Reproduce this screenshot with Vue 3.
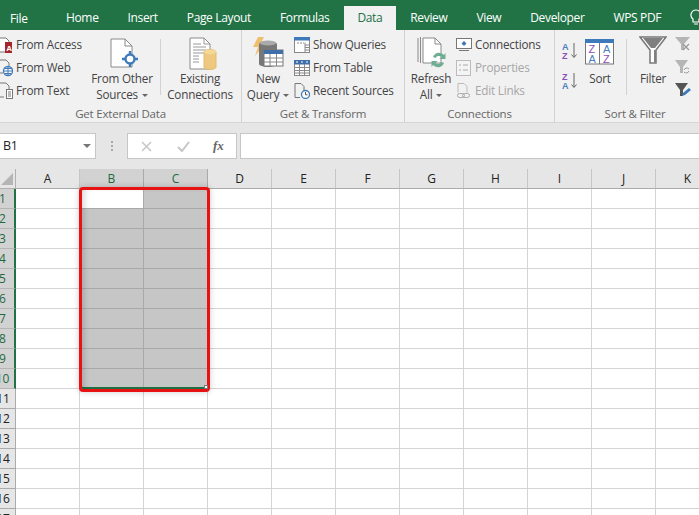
<script setup>
const tabs = ['Home', 'Insert', 'Page Layout', 'Formulas', 'Data', 'Review', 'View', 'Developer', 'WPS PDF']
const columns = ['A', 'B', 'C', 'D', 'E', 'F', 'G', 'H', 'I', 'J', 'K']
const rows = Array.from({ length: 17 }, (_, i) => i + 1)

function cellClass(row, col) {
  const inRange = row <= 10 && (col === 'B' || col === 'C')
  return { sel: inRange && !(row === 1 && col === 'B'), active: row === 1 && col === 'B' }
}
</script>

<template>
  <div class="app">
    <!-- tabs -->
    <div class="tabbar">
      <span class="file">File</span>
      <span v-for="t in tabs" :key="t" class="tab" :class="{ on: t === 'Data' }">{{ t }}</span>
      <svg class="bulb" width="12" height="18" viewBox="0 0 12 18"><path d="M6 1a5 5 0 0 0-3 9v3h6v-3a5 5 0 0 0-3-9zM4 15h4" fill="none" stroke="#fff" stroke-width="1.2"/></svg>
    </div>

    <!-- ribbon -->
    <div class="ribbon">
      <section class="group g1">
        <div class="body">
          <div class="smalls w-ext">
            <div class="small">
              <svg class="ic" width="13" height="18" viewBox="0 0 13 18"><path d="M0 2h6l3 3v11H0" fill="#fff" stroke="#777"/><rect x="5" y="6" width="7" height="11" fill="#a4262c"/><text x="6.200" y="15" font-size="8" font-weight="700" fill="#fff" font-family="Liberation Sans">A</text></svg>
              From Access
            </div>
            <div class="small">
              <svg class="ic" width="13" height="18" viewBox="0 0 13 18"><path d="M0 1h6l3 3v3M0 14h3" fill="none" stroke="#777"/><circle cx="8" cy="12" r="4.500" fill="#fff" stroke="#3e79b9" stroke-width="1.300"/><path d="M3.500 12h9M8 7.500v9M5 9.500h6M5 14.500h6" stroke="#3e79b9"/></svg>
              From Web
            </div>
            <div class="small">
              <svg class="ic" width="13" height="18" viewBox="0 0 13 18"><path d="M0 1h6l3 3v3M0 15h4" fill="none" stroke="#777"/><rect x="6.500" y="7.500" width="6" height="9" fill="#fff" stroke="#777"/><path d="M8 10h3M8 12h3M8 14h3" stroke="#777"/></svg>
              From Text
            </div>
          </div>
          <div class="big w-other">
            <svg class="bigicon" width="30" height="34" viewBox="0 0 30 34"><path d="M1 1h14l7 7v21H1z" fill="#fff" stroke="#8a8a8a"/><path d="M15 1v7h7" fill="none" stroke="#8a8a8a"/><circle cx="20" cy="21" r="4.500" fill="#fff" stroke="#3e79b9" stroke-width="2.400"/><path d="M12 21h4M24 21h4M20 13v4M20 25v4" stroke="#3e79b9" stroke-width="2.400"/></svg>
            <span>From Other</span>
            <span>Sources <i class="caret"></i></span>
          </div>
          <div class="sep s1"></div>
          <div class="big w-exist">
            <svg class="bigicon" width="30" height="34" viewBox="0 0 30 34"><path d="M1 1h14l6 6v25H1z" fill="#fff" stroke="#8a8a8a"/><path d="M15 1v6h6M4 7h8M4 10h13M4 13h13M4 16h13M4 19h6M4 22h6M4 25h6" fill="none" stroke="#9a9a9a"/><path d="M15 15a6 2.500 0 0 1 12 0v15a6 2.500 0 0 1-12 0z" fill="#edc87e" stroke="#e3bb6b"/><ellipse cx="21" cy="15" rx="6" ry="2.500" fill="#f4d898"/></svg>
            <span>Existing</span>
            <span>Connections</span>
          </div>
        </div>
        <div class="label">Get External Data</div>
      </section>

      <section class="group g2">
        <div class="body">
          <div class="big w-query">
            <svg class="bigicon" width="34" height="34" viewBox="0 0 34 34"><path d="M7 1h6l-4 8h4L4 20l3-9H2z" fill="#eec06e"/><path d="M8 8a9 3 0 0 1 18 0v20a9 3 0 0 1-18 0z" fill="#777"/><ellipse cx="17" cy="7" rx="8" ry="2.600" fill="#aaa"/><rect x="13" y="14" width="19" height="16" fill="#fff" stroke="#777"/><rect x="13" y="14" width="19" height="4" fill="#3e6fa8"/><path d="M13 22h19M13 26h19M19 18v12M25.500 18v12" stroke="#888"/></svg>
            <span>New</span>
            <span>Query <i class="caret"></i></span>
          </div>
          <div class="smalls">
            <div class="small">
              <svg class="ic2" width="16" height="16" viewBox="0 0 16 16"><rect x=".5" y=".5" width="15" height="15" fill="#fff" stroke="#888"/><rect y="0" width="16" height="3.500" fill="#3e79b9"/><path d="M11 5.500v10M11 8h4M11 10.500h4M11 13h4M3 6h2M6 6h2M9 6h1" stroke="#888"/></svg>
              Show Queries
            </div>
            <div class="small">
              <svg class="ic2" width="16" height="16" viewBox="0 0 16 16"><rect x=".5" y=".5" width="15" height="15" fill="#fff" stroke="#888"/><rect y="0" width="16" height="4.500" fill="#3e6fa8"/><path d="M2 2h2M7 2h2M12 2h2" stroke="#fff"/><path d="M0 7.500h16M0 10.500h16M0 13h16M5.500 4v12M10.500 4v12" stroke="#888"/></svg>
              From Table
            </div>
            <div class="small">
              <svg class="ic2" width="16" height="16" viewBox="0 0 16 16"><path d="M1 .500h6l3 3v6M1 .5v14h5" fill="none" stroke="#777"/><circle cx="11.500" cy="11.500" r="4" fill="#fff" stroke="#3e79b9" stroke-width="1.300"/><path d="M11.500 9v2.800h2" fill="none" stroke="#555"/></svg>
              Recent Sources
            </div>
          </div>
        </div>
        <div class="label">Get &amp; Transform</div>
      </section>

      <section class="group g3">
        <div class="body">
          <div class="big w-refresh">
            <svg class="bigicon" width="32" height="34" viewBox="0 0 32 34"><path d="M3 2v24M5.500 1v26" stroke="#8a8a8a" fill="none"/><path d="M8 2h12l6 6v19H8z" fill="#fff" stroke="#8a8a8a"/><path d="M20 2v6h6" fill="none" stroke="#8a8a8a"/><path d="M18 21a6.500 6.500 0 0 1 11-2l1.500-2v6h-6l2-2a4 4 0 0 0-6 1zM29 27a6.500 6.500 0 0 1-11 2l-1.500 2v-6h6l-2 2a4 4 0 0 0 6-1z" fill="#6fae93"/></svg>
            <span>Refresh</span>
            <span>All <i class="caret"></i></span>
          </div>
          <div class="smalls">
            <div class="small">
              <svg class="ic2" width="16" height="16" viewBox="0 0 16 16"><rect x=".5" y="1.500" width="15" height="10" fill="#fff" stroke="#777"/><path d="M8 4l2.500 2.500L8 9 5.500 6.500z" fill="#3e79b9"/><path d="M3 13.500h10" stroke="#777"/></svg>
              Connections
            </div>
            <div class="small dim">
              <svg class="ic2" width="16" height="16" viewBox="0 0 16 16"><rect x=".5" y=".5" width="14" height="15" fill="#f4f4f4" stroke="#bbb"/><path d="M3 5h2M3 10h2M7 5h5M7 10h5" stroke="#aaa"/></svg>
              Properties
            </div>
            <div class="small dim">
              <svg class="ic2" width="16" height="16" viewBox="0 0 16 16"><path d="M2 .500h6l3 3v6M2 .5v9" fill="none" stroke="#bbb"/><rect x="1.500" y="10.500" width="7" height="4" rx="2" fill="none" stroke="#aaa"/><rect x="6.500" y="10.500" width="7" height="4" rx="2" fill="none" stroke="#aaa"/></svg>
              Edit Links
            </div>
          </div>
        </div>
        <div class="label">Connections</div>
      </section>

      <section class="group g4">
        <div class="body">
          <div class="sorts">
            <svg width="16" height="18" viewBox="0 0 16 18" font-family="Liberation Sans" font-size="9" font-weight="700"><text x="0" y="8" fill="#4a7fc0">A</text><text x="0" y="17" fill="#8a4fb5">Z</text><path d="M12 1v14M9.500 12.500l2.500 3 2.500-3" fill="none" stroke="#666"/></svg>
            <svg width="16" height="18" viewBox="0 0 16 18" font-family="Liberation Sans" font-size="9" font-weight="700"><text x="0" y="8" fill="#8a4fb5">Z</text><text x="0" y="17" fill="#4a7fc0">A</text><path d="M12 1v14M9.500 12.500l2.500 3 2.500-3" fill="none" stroke="#666"/></svg>
          </div>
          <div class="big w-sort">
            <svg class="bigicon" width="30" height="26" viewBox="0 0 30 26" font-family="Liberation Sans" font-size="11" font-weight="400"><rect x=".5" y=".5" width="28" height="24.500" fill="#fff" stroke="#777"/><rect width="29" height="4" fill="#3e79b9"/><path d="M14.500 4v21" stroke="#777"/><text x="3.500" y="14" fill="#8a4fb5">Z</text><text x="3.500" y="24" fill="#4a7fc0">A</text><text x="18" y="14" fill="#4a7fc0">A</text><text x="18" y="24" fill="#8a4fb5">Z</text></svg>
            <span>Sort</span>
          </div>
          <div class="sep s4"></div>
          <div class="big w-filter">
            <svg class="bigicon" width="28" height="28" viewBox="0 0 28 28"><path d="M1 1h26L17 14v13h-6V14z" fill="#fff" stroke="#777" stroke-width="1.500"/><path d="M4 2h20l-8 10h-4zM15 14h2v12h-2z" fill="#7f7f7f"/></svg>
            <span>Filter</span>
          </div>
          <div class="filter-tools">
            <svg width="16" height="16" viewBox="0 0 16 16"><path d="M0 1h15L9 8v6H6V8z" fill="#b5b5b5"/><path d="M8 8l6 6M14 8l-6 6" stroke="#999" stroke-width="1.300"/></svg>
            <svg width="16" height="16" viewBox="0 0 16 16"><path d="M0 1h13L8 8v6H5V8z" fill="#b5b5b5"/><path d="M9 11a3 3 0 0 1 5-1M14 12a3 3 0 0 1-5 1" fill="none" stroke="#999"/></svg>
            <svg width="16" height="16" viewBox="0 0 16 16"><path d="M0 1h13L8 8v6H5V8z" fill="#555"/><path d="M7 14l1-3 6-5 2 2-6 5z" fill="#3e79b9"/></svg>
          </div>
        </div>
        <div class="label">Sort &amp; Filter</div>
      </section>
    </div>

    <!-- formula bar -->
    <div class="fbar">
      <div class="namebox">B1<i class="down"></i></div>
      <div class="dots"></div>
      <div class="fxbox">
        <svg width="11" height="11" viewBox="0 0 11 11"><path d="M1 1l9 9M10 1l-9 9" stroke="#c6c6c6" stroke-width="1.500"/></svg>
        <svg width="13" height="11" viewBox="0 0 13 11"><path d="M1 6l4 4 7-9" fill="none" stroke="#c6c6c6" stroke-width="2"/></svg>
        <span class="fx">fx</span>
      </div>
      <div class="finput"></div>
    </div>

    <!-- sheet -->
    <div class="sheet">
      <div class="corner"><i></i></div>
      <div v-for="c in columns" :key="c" class="colh" :class="{ hot: c === 'B' || c === 'C' }">{{ c }}</div>
      <template v-for="r in rows" :key="r">
        <div class="rowh" :class="{ hot: r <= 10 }">{{ r }}</div>
        <div v-for="c in columns" :key="c" class="cell" :class="cellClass(r, c)"></div>
      </template>
      <div class="selection"><i class="handle"></i></div>
    </div>
  </div>
</template>

<style>
html, body {
  margin: 0;
  background: #fff;
}
</style>

<style scoped>
.app {
  width: 699px;
  height: 515px;
  overflow: hidden;
  font-family: "Open Sans", "Noto Sans", sans-serif;
  font-size: 11.7px;
  letter-spacing: -0.2px;
  color: #444;
  background: #fff;
}

/* Tabs */
.tabbar {
  height: 30px;
  background: #217346;
  display: flex;
  align-items: flex-end;
  color: #fff;
  white-space: nowrap;
  font-size: 12px;
  letter-spacing: -0.35px;
}
.file {
  flex: none;
  width: 51.5px;
  padding-left: 10px;
  box-sizing: border-box;
  line-height: 24px;
  height: 23px;
}
.tab {
  flex: none;
  height: 24px;
  line-height: 24px;
  padding: 0 14.5px;
}
.tab.on {
  background: #f1f1f1;
  color: #217346;
  padding: 0 13.5px;
}
.bulb {
  margin-left: 14px;
  margin-bottom: 3px;
  flex: none;
}

/* Ribbon */
.ribbon {
  height: 92px;
  background: #f1f1f1;
  border-bottom: 1px solid #d6d6d6;
  display: flex;
  white-space: nowrap;
}
.group {
  flex: none;
  height: 92px;
  display: flex;
  flex-direction: column;
  border-right: 1px solid #d2d2d2;
  box-sizing: border-box;
}
.g1 { width: 242px; }
.g2 { width: 163px; }
.g3 { width: 150px; }
.g4 { width: 160px; border-right: 0; }
.body {
  flex: 1;
  display: flex;
  min-height: 0;
}
.label {
  height: 16px;
  line-height: 16px;
  text-align: center;
  color: #666;
  font-size: 11.5px;
}
.smalls {
  display: flex;
  flex-direction: column;
  padding-top: 3px;
}
.w-ext { width: 91px; flex: none; }
.small {
  height: 23px;
  line-height: 23px;
  display: flex;
  align-items: center;
  gap: 3px;
}
.small.dim { color: #a6a6a6; }
.ic, .ic2 { flex: none; }
.big {
  flex: none;
  display: flex;
  flex-direction: column;
  align-items: center;
  line-height: 16px;
  padding-top: 40px;
  position: relative;
  box-sizing: border-box;
}
.bigicon {
  position: absolute;
  top: 6px;
  left: 50%;
  transform: translateX(-50%);
}
.w-other { width: 62px; }
.w-other .bigicon { top: 8px; margin-left: 3px; }
.w-exist { width: 68px; margin-left: -1px; }
.w-exist .bigicon { top: 7px; margin-left: 4px; }
.w-query { width: 52px; }
.w-refresh { width: 52px; margin-right: -1px; }
.w-sort { width: 32px; }
.w-sort .bigicon { top: 9px; }
.w-filter { width: 40px; }
.sep {
  width: 1px;
  height: 56px;
  margin: 9px 6px 0;
  background: #d2d2d2;
  flex: none;
}
.s1 { margin-left: 7px; }
.s4 { margin-left: 10px; }
.caret {
  display: inline-block;
  border: 3px solid transparent;
  border-top: 3px solid #666;
  border-bottom: 0;
  vertical-align: middle;
  margin-left: 1px;
}
.sorts {
  width: 29px;
  flex: none;
  padding: 12px 0 0 7px;
  box-sizing: border-box;
  display: flex;
  flex-direction: column;
  gap: 12px;
}
.filter-tools {
  display: flex;
  flex-direction: column;
  gap: 7px;
  padding-top: 6px;
  margin-left: 2px;
}

/* Formula bar */
.fbar {
  height: 46px;
  box-sizing: border-box;
  background: #e6e6e6;
  padding-top: 10px;
  display: flex;
  align-items: flex-start;
}
.namebox, .fxbox, .finput {
  height: 26px;
  box-sizing: border-box;
  background: #fff;
  border: 1px solid #c6c6c6;
}
.namebox {
  width: 97px;
  margin-left: -1px;
  padding-left: 3px;
  line-height: 24px;
  color: #222;
  position: relative;
  font-size: 12.5px;
}
.down {
  position: absolute;
  right: 4px;
  top: 10px;
  border: 4px solid transparent;
  border-top: 4px solid #777;
  border-bottom: 0;
}
.dots {
  width: 2px;
  height: 10px;
  margin: 8px 14px 0 15px;
  background: repeating-linear-gradient(#aaa 0 2px, transparent 2px 4px);
}
.fxbox {
  width: 110px;
  display: flex;
  align-items: center;
  padding-left: 13px;
  gap: 25px;
}
.fx {
  font-family: "Liberation Serif", serif;
  font-style: italic;
  font-weight: 700;
  color: #666;
  font-size: 13px;
  margin-left: -2px;
}
.finput {
  flex: 1;
  margin-left: 3px;
  border-right: 0;
}

/* Sheet */
.sheet {
  display: grid;
  grid-template-columns: 28px repeat(11, 64px);
  grid-auto-rows: 20px;
  margin-left: -12px;
  width: 740px;
  position: relative;
  color: #222;
  font-size: 12px;
  letter-spacing: 0;
}
.corner {
  background: #e6e6e6;
  border-right: 1px solid #b0b0b0;
  border-bottom: 1px solid #b0b0b0;
  position: relative;
}
.corner i {
  position: absolute;
  right: 2px;
  bottom: 3px;
  border-style: solid;
  border-width: 0 0 12px 12px;
  border-color: transparent transparent #b5b5b5 transparent;
}
.colh {
  background: #e6e6e6;
  border-right: 1px solid #c6c6c6;
  border-bottom: 1px solid #ababab;
  text-align: center;
  line-height: 19px;
}
.colh.hot {
  background: #d2d2d2;
  color: #1d6a40;
  border-right-color: #a9a9a9;
}
.rowh {
  background: #e6e6e6;
  border-right: 1px solid #ababab;
  border-bottom: 1px solid #ababab;
  text-align: center;
  line-height: 20px;
  padding-left: 3px;
}
.rowh.hot {
  background: #d2d2d2;
  color: #1d6a40;
  border-right: 2px solid #217346;
  border-bottom-color: #b5b5b5;
}
.cell {
  border-right: 1px solid #d4d4d4;
  border-bottom: 1px solid #d4d4d4;
}
.cell.sel {
  background: #c6c6c6;
  border-color: #a9a9a9;
}
.cell.active {
  border-bottom-color: #a9a9a9;
  border-right-color: #a9a9a9;
}
/* sits over the B1:C10 grid area */
.selection {
  position: absolute;
  grid-column: 3 / 5;
  grid-row: 2 / 12;
  inset: -2px -2px -3px -1px;
  border: 3px solid #e81212;
  border-radius: 4px;
  box-shadow: 0 0 6px rgba(0, 0, 0, .2), inset 5px 0 6px -3px rgba(0, 0, 0, .18), inset 0 -2px 0 #217346;
}
.handle {
  position: absolute;
  right: -1px;
  bottom: 0;
  width: 4px;
  height: 4px;
  background: #fff;
  border: 1px solid #777;
  box-sizing: border-box;
}
</style>
